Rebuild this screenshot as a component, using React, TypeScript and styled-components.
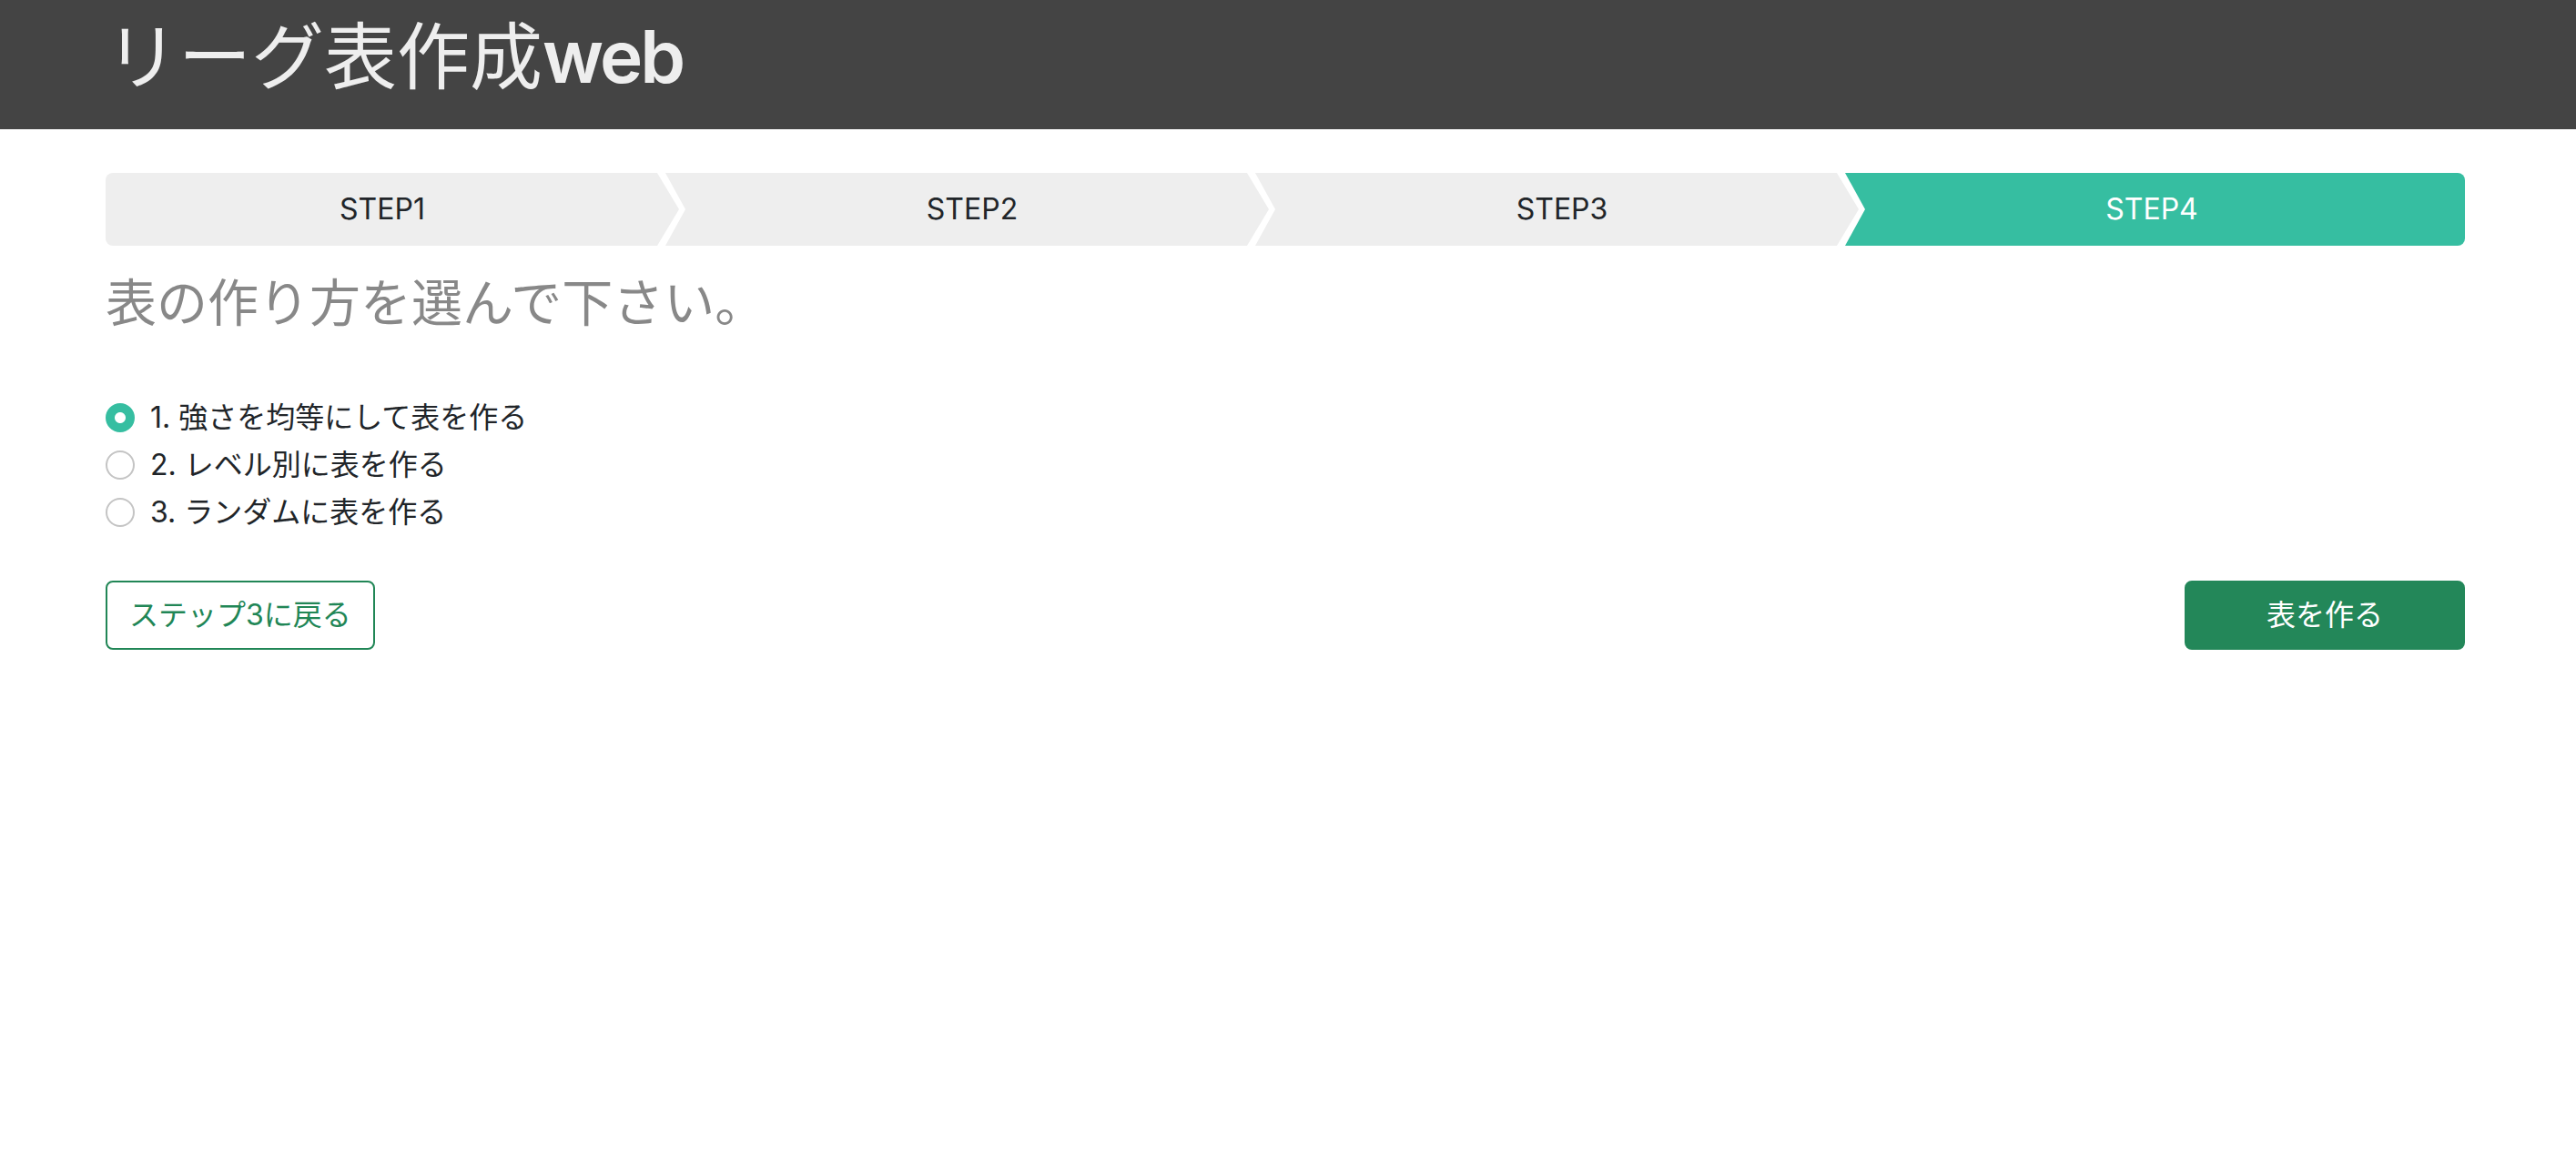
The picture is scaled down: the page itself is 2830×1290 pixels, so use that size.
import React, { useState } from 'react';
import styled, { createGlobalStyle, css } from 'styled-components';

const GlobalStyle = createGlobalStyle`
  html, body {
    margin: 0;
    padding: 0;
    background: #fff;
  }
  body {
    font-family: Inter, 'Noto Sans CJK JP', sans-serif;
    font-size: 32px;
    line-height: 1.5;
    color: #212529;
  }
  * {
    box-sizing: border-box;
  }
`;

const steps = ['STEP1', 'STEP2', 'STEP3', 'STEP4'];

const methods = [
  '1. 強さを均等にして表を作る',
  '2. レベル別に表を作る',
  '3. ランダムに表を作る',
];

const App = () => {
  const [method, setMethod] = useState(0);

  return (
    <>
      <GlobalStyle />
      <Header>
        <Title>リーグ表作成<Latin>web</Latin></Title>
      </Header>
      <Container>
        <StepBar>
          {steps.map((label, i) => (
            <Step
              key={label}
              first={i === 0}
              last={i === steps.length - 1}
              active={i === steps.length - 1}
            >
              {label}
            </Step>
          ))}
        </StepBar>
        <Heading>表の作り方を選んで下さい。</Heading>
        <RadioGroup>
          {methods.map((label, i) => (
            <RadioRow key={label}>
              <RadioInput
                type='radio'
                name='method'
                checked={method === i}
                onChange={() => setMethod(i)}
              />
              {label}
            </RadioRow>
          ))}
        </RadioGroup>
        <ButtonTray>
          <OutlineButton>ステップ3に戻る</OutlineButton>
          <SolidButton>表を作る</SolidButton>
        </ButtonTray>
      </Container>
    </>
  );
}

export default App;

const Header = styled.header`
  background: #444444;
  height: 142px;
  padding: 8px 0 0 116px;
`;

const Title = styled.h1`
  margin: 0;
  font-family: 'Noto Sans CJK JP', sans-serif;
  font-size: 80px;
  font-weight: 400;
  line-height: 96px;
  color: #eeeeee;
`;

const Latin = styled.span`
  font-family: Inter, sans-serif;
  font-weight: 600;
  letter-spacing: -3px;
`;

const Container = styled.main`
  margin: 0 122px 0 116px;
`;

const StepBar = styled.div`
  display: flex;
  height: 80px;
  margin-top: 48px;
`;

type StepProps = {
  first: boolean;
  last: boolean;
  active: boolean;
}

const tip = 'calc(100% - 42px) 0, calc(100% - 18px) 50%, calc(100% - 42px) 100%';

const Step = styled.div.withConfig({
  shouldForwardProp: (prop) => !['first', 'last', 'active'].includes(prop),
})<StepProps>`
  flex: 0 0 ${props => props.first ? 648 : 681}px;
  margin-left: ${props => props.first ? 0 : -33}px;
  padding: 0 40px 0 ${props => props.first ? 0 : 33}px;
  display: flex;
  align-items: center;
  justify-content: center;
  font-size: 32px;
  background: ${props => props.active ? '#36bea1' : '#eeeeee'};
  color: ${props => props.active ? '#ffffff' : '#212529'};
  border-radius: ${props => props.first ? '8px 0 0 8px' : props.last ? '0 8px 8px 0' : '0'};
  ${props => props.first && css`
    clip-path: polygon(0 0, ${tip}, 0 100%);
  `}
  ${props => !props.first && !props.last && css`
    clip-path: polygon(0 0, ${tip}, 0 100%, 22px 50%);
  `}
  ${props => props.last && css`
    clip-path: polygon(0 0, 100% 0, 100% 100%, 0 100%, 22px 50%);
  `}
`;

const Heading = styled.h3`
  margin: 30px 0 16px;
  font-size: 56px;
  font-weight: 400;
  line-height: 67px;
  color: #888888;
`;

const RadioGroup = styled.div`
  margin-top: 68px;
`;

const RadioRow = styled.label`
  display: flex;
  align-items: flex-start;
  min-height: 48px;
  margin-bottom: 4px;
  font-size: 32px;
  line-height: 48px;
  color: #212529;
  cursor: pointer;
`;

const RadioInput = styled.input`
  appearance: none;
  -webkit-appearance: none;
  width: 32px;
  height: 32px;
  margin: 8px 17px 0 0;
  border-radius: 50%;
  border: 2px solid #c4c4c4;
  background: #fff;
  flex-shrink: 0;
  cursor: pointer;

  &:checked {
    border-color: #36bea1;
    background: radial-gradient(circle, #ffffff 0 5.5px, #36bea1 6.5px);
  }

  &:focus {
    outline: none;
  }
`;

const ButtonTray = styled.div`
  display: flex;
  justify-content: space-between;
  margin-top: 51px;
`;

const BaseButton = styled.button`
  height: 76px;
  padding: 0 24px;
  border-radius: 8px;
  font-family: Inter, 'Noto Sans CJK JP', sans-serif;
  font-size: 32px;
  line-height: 48px;
  cursor: pointer;
`;

const OutlineButton = styled(BaseButton)`
  border: 2px solid #218656;
  background: #ffffff;
  color: #218656;
`;

const SolidButton = styled(BaseButton)`
  width: 308px;
  border: 2px solid #238759;
  background: #238759;
  color: #ffffff;
`;
